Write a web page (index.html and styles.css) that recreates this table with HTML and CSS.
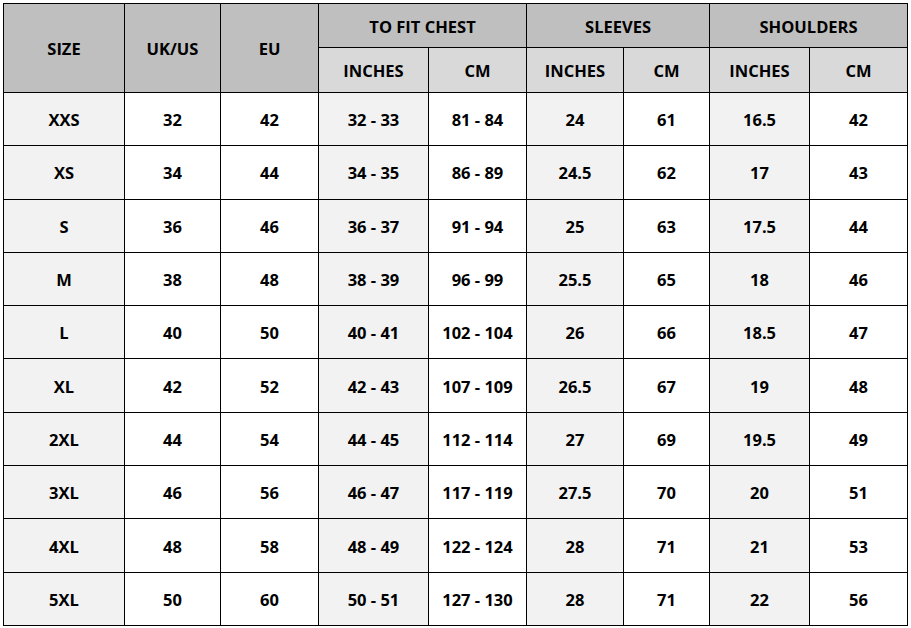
FILE: index.html
```html
<!DOCTYPE html>
<html>
<head>
<meta charset="utf-8">
<link rel="stylesheet" href="styles.css">
</head>
<body>
<table class="chart">
  <colgroup>
    <col class="c1"><col class="c2"><col class="c3"><col class="c4"><col class="c5"><col class="c6"><col class="c7"><col class="c8"><col class="c9">
  </colgroup>
  <thead>
    <tr class="h1">
      <th rowspan="2" class="dark">SIZE</th>
      <th rowspan="2" class="dark">UK/US</th>
      <th rowspan="2" class="dark">EU</th>
      <th colspan="2" class="dark">TO FIT CHEST</th>
      <th colspan="2" class="dark">SLEEVES</th>
      <th colspan="2" class="dark">SHOULDERS</th>
    </tr>
    <tr class="h2">
      <th class="light">INCHES</th><th class="light">CM</th>
      <th class="light">INCHES</th><th class="light">CM</th>
      <th class="light">INCHES</th><th class="light">CM</th>
    </tr>
  </thead>
  <tbody>
    <tr><td class="g">XXS</td><td>32</td><td>42</td><td class="g">32 - 33</td><td>81 - 84</td><td class="g">24</td><td>61</td><td class="g">16.5</td><td>42</td></tr>
    <tr><td class="g">XS</td><td>34</td><td>44</td><td class="g">34 - 35</td><td>86 - 89</td><td class="g">24.5</td><td>62</td><td class="g">17</td><td>43</td></tr>
    <tr><td class="g">S</td><td>36</td><td>46</td><td class="g">36 - 37</td><td>91 - 94</td><td class="g">25</td><td>63</td><td class="g">17.5</td><td>44</td></tr>
    <tr><td class="g">M</td><td>38</td><td>48</td><td class="g">38 - 39</td><td>96 - 99</td><td class="g">25.5</td><td>65</td><td class="g">18</td><td>46</td></tr>
    <tr><td class="g">L</td><td>40</td><td>50</td><td class="g">40 - 41</td><td>102 - 104</td><td class="g">26</td><td>66</td><td class="g">18.5</td><td>47</td></tr>
    <tr><td class="g">XL</td><td>42</td><td>52</td><td class="g">42 - 43</td><td>107 - 109</td><td class="g">26.5</td><td>67</td><td class="g">19</td><td>48</td></tr>
    <tr><td class="g">2XL</td><td>44</td><td>54</td><td class="g">44 - 45</td><td>112 - 114</td><td class="g">27</td><td>69</td><td class="g">19.5</td><td>49</td></tr>
    <tr><td class="g">3XL</td><td>46</td><td>56</td><td class="g">46 - 47</td><td>117 - 119</td><td class="g">27.5</td><td>70</td><td class="g">20</td><td>51</td></tr>
    <tr><td class="g">4XL</td><td>48</td><td>58</td><td class="g">48 - 49</td><td>122 - 124</td><td class="g">28</td><td>71</td><td class="g">21</td><td>53</td></tr>
    <tr><td class="g">5XL</td><td>50</td><td>60</td><td class="g">50 - 51</td><td>127 - 130</td><td class="g">28</td><td>71</td><td class="g">22</td><td>56</td></tr>
  </tbody>
</table>
</body>
</html>
```
FILE: styles.css
```css
html, body {
  margin: 0;
  padding: 0;
  background: #ffffff;
}
body {
  padding: 3px 0 0 3px;
  font-family: "Open Sans", "Liberation Sans", sans-serif;
}
.chart {
  border-collapse: collapse;
  table-layout: fixed;
  width: 905px;
  color: #000000;
  font-weight: 700;
  font-size: 16.5px;
}
.c1 { width: 121px; }
.c2 { width: 96px; }
.c3 { width: 98px; }
.c4 { width: 110px; }
.c5 { width: 98px; }
.c6 { width: 97px; }
.c7 { width: 86px; }
.c8 { width: 100px; }
.c9 { width: 98px; }
.chart th,
.chart td {
  border: 1px solid #000000;
  text-align: center;
  vertical-align: middle;
  padding: 2px 0 0 0;
  font-weight: 700;
  line-height: 20px;
}
.h1 { height: 44px; }
.h2 { height: 45px; }
.chart tbody tr { height: 53.3px; }
.dark { background: #bfbfbf; }
.light { background: #d9d9d9; }
.g { background: #f2f2f2; }
```
